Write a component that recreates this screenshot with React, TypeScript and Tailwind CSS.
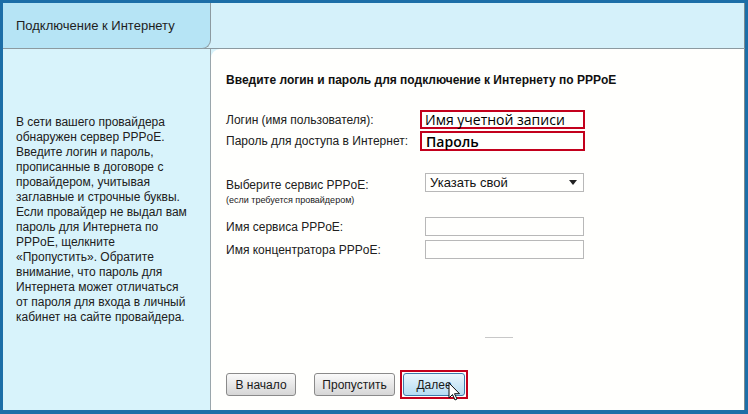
import React from "react";

const font = { fontFamily: '"Liberation Sans", Arial, sans-serif' };

const helpLines = [
    "В сети вашего провайдера",
    "обнаружен сервер PPPoE.",
    "Введите логин и пароль,",
    "прописанные в договоре с",
    "провайдером, учитывая",
    "заглавные и строчные буквы.",
    "Если провайдер не выдал вам",
    "пароль для Интернета по",
    "PPPoE, щелкните",
    "«Пропустить». Обратите",
    "внимание, что пароль для",
    "Интернета может отличаться",
    "от пароля для входа в личный",
    "кабинет на сайте провайдера.",
];

const Btn = ({ label, w, blue }: { label: string; w: string; blue?: boolean }) => (
    <button
        className={`h-[23px] ${w} rounded-[3px] border text-[12px] text-[#1a1a1a] ${
            blue
                ? "border-[#3d7bab] bg-gradient-to-b from-[#eaf6fd] to-[#b5dcf2]"
                : "border-[#8a8a8a] bg-gradient-to-b from-[#fafafa] to-[#d6d6d6]"
        }`}
    >
        {label}
    </button>
);

export default function App() {
    return (
        <div className="w-[748px] h-[414px] bg-[#1c6ea7] pt-[3px] px-[3px] pb-[4px] flex flex-col" style={font}>
            {/* шапка */}
            <div className="flex h-[46px] shrink-0 bg-[#d5f1fa] border-b border-[#8c9aa0]">
                <div className="w-[208px] bg-[#b6e4f5] border-r border-[#8c9aa0] rounded-br-[9px] flex items-center pl-[13px] text-[13px] text-[#1e1e1e] -mb-px border-b">
                    Подключение к Интернету
                </div>
                <div className="flex-1 border-r border-[#7c8a90]" />
            </div>

            <div className="flex flex-1 bg-[#d8f3fb]">
                {/* левая панель */}
                <div className="w-[208px] border-r border-[#9aa6ab] pl-[13px] pt-[66px] text-[12px] leading-[15px] text-[#202020]">
                    {helpLines.map((l) => (
                        <div key={l}>{l}</div>
                    ))}
                </div>

                {/* форма */}
                <div className="relative flex-1 bg-[#fffffd] rounded-tl-[9px] border-r border-[#7c8a90] pl-[15px] pt-[24px] flex flex-col text-[12px] text-[#202020]">
                    <div className="font-bold text-[#111] leading-[14px]">
                        Введите логин и пароль для подключение к Интернету по PPPoE
                    </div>

                    <div className="mt-[23px] flex items-center h-[19px]">
                        <div className="w-[194px]">Логин (имя пользователя):</div>
                        <div className="w-[165px] h-[19px] border-2 border-[#c3001c] pl-[3px] flex items-center text-[14px] text-black" style={{ fontFamily: '"Open Sans", sans-serif' }}>
                            Имя учетной записи
                        </div>
                    </div>
                    <div className="mt-[2px] flex items-center h-[20px]">
                        <div className="w-[194px]">Пароль для доступа в Интернет:</div>
                        <div className="w-[165px] h-[20px] border-2 border-[#c3001c] pl-[4px] flex items-center text-[14px] font-semibold text-black" style={{ fontFamily: '"Open Sans", sans-serif' }}>
                            Пароль
                        </div>
                    </div>

                    <div className="mt-[22px] flex h-[19px]">
                        <div className="w-[199px] pt-[3px]">Выберите сервис PPPoE:</div>
                        <div className="w-[159px] h-[19px] border border-[#b8b8b8] flex items-center justify-between pl-[4px] pr-[6px] text-[13px] text-[#111]">
                            <span>Указать свой</span>
                            <svg width="8" height="5" viewBox="0 0 8 5">
                                <path d="M0 0h8L4 5z" fill="#222" />
                            </svg>
                        </div>
                    </div>
                    <div className="text-[9px] mt-[3px] leading-[11px]">(если требуется провайдером)</div>

                    <div className="mt-[11px] flex items-center h-[19px]">
                        <div className="w-[199px]">Имя сервиса PPPoE:</div>
                        <div className="w-[159px] h-[19px] border border-[#b8b8b8]" />
                    </div>
                    <div className="mt-[4px] flex items-center h-[19px]">
                        <div className="w-[199px]">Имя концентратора PPPoE:</div>
                        <div className="w-[159px] h-[19px] border border-[#b8b8b8]" />
                    </div>

                    <div className="mt-[78px] ml-[259px] w-[28px] h-px bg-[#c8c8c8]" />

                    <div className="mt-[32px] flex items-center">
                        <Btn label="В начало" w="w-[70px]" />
                        <div className="ml-[18px]">
                            <Btn label="Пропустить" w="w-[81px]" />
                        </div>
                        <div className="ml-[5px] border-2 border-[#c3001c] p-px">
                            <Btn label="Далее" w="w-[62px]" blue />
                        </div>
                    </div>

                    {/* курсор */}
                    <svg className="absolute left-[237px] top-[333px]" width="13" height="19" viewBox="0 0 13 19">
                        <path d="M1 1v15l3.5-3.5 2.5 5.5 2-1-2.5-5.3H11.5z" fill="#fff" stroke="#111" strokeWidth="1" strokeLinejoin="round" />
                    </svg>
                </div>
            </div>
        </div>
    );
}
